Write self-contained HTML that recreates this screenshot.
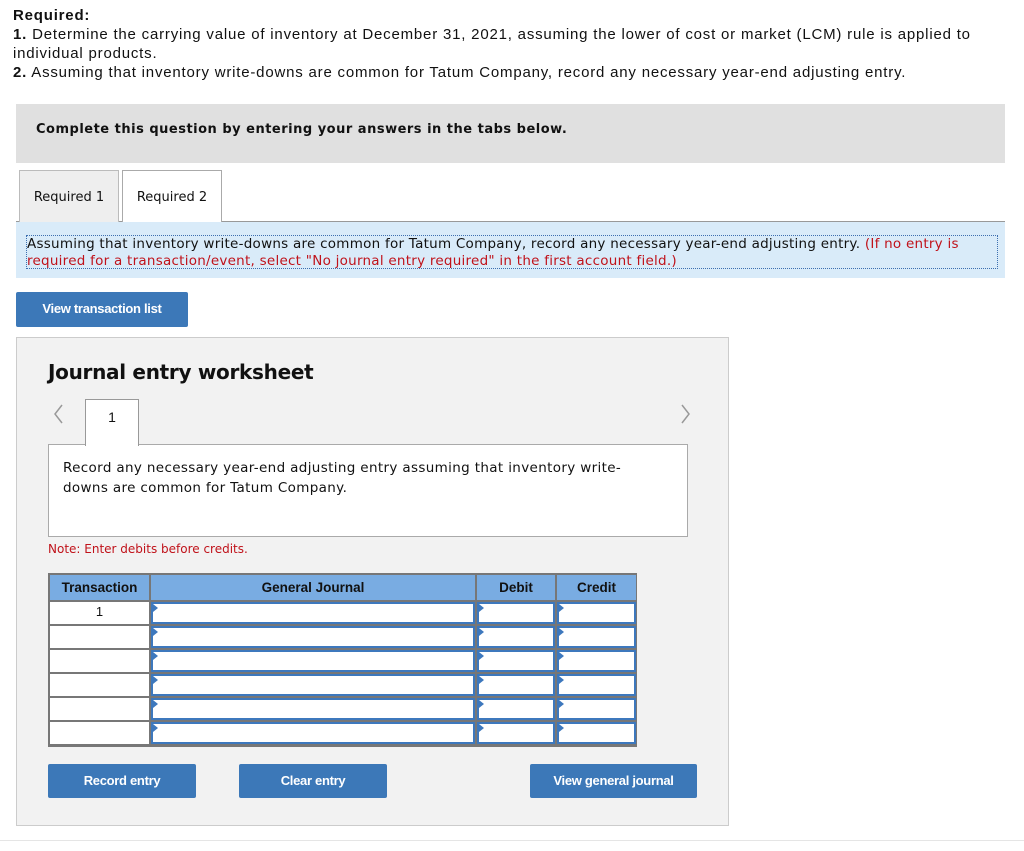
<!DOCTYPE html>
<html><head><style>
body{margin:0;width:1024px;height:851px;background:#fff;position:relative;font-family:"Liberation Sans",sans-serif;color:#111;overflow:hidden}
.a{position:absolute}
.v{font-family:"DejaVu Sans",sans-serif}
.btn{position:absolute;background:#3c78b8;color:#fff;font:bold 13px "Liberation Sans",sans-serif;text-align:center;border-radius:2px;letter-spacing:-0.3px}
.cell{position:absolute;box-sizing:border-box;background:#fff}
.in{position:absolute;box-sizing:border-box;background:#fff;border:2px solid #3d78bd}
.in:before{content:"";position:absolute;left:0;top:0;border-left:5px solid #3d78bd;border-top:4px solid transparent;border-bottom:4px solid transparent}
</style></head><body>
<div class="a" style="left:13px;top:6px;font-size:15px;line-height:19px;width:990px;letter-spacing:0.8px">
<b>Required:</b><br><b>1.</b> Determine the carrying value of inventory at December 31, 2021, assuming the lower of cost or market (LCM) rule is applied to individual products.<br><b>2.</b> Assuming that inventory write-downs are common for Tatum Company, record any necessary year-end adjusting entry.</div>
<div class="a" style="left:16px;top:104px;width:989px;height:59px;background:#e0e0e0"></div>
<div class="a v" style="left:36px;top:122px;font-size:13px;font-weight:bold;letter-spacing:0.5px">Complete this question by entering your answers in the tabs below.</div>
<div class="a" style="left:16px;top:221px;width:989px;height:1px;background:#999"></div>
<div class="a v" style="left:19px;top:170px;width:98px;height:51px;background:#eee;border:1px solid #bbb;border-bottom:none;font-size:13px;line-height:53px;text-align:center">Required 1</div>
<div class="a v" style="left:122px;top:170px;width:98px;height:53px;background:#fff;border:1px solid #aaa;border-bottom:none;font-size:13px;line-height:53px;text-align:center">Required 2</div>
<div class="a" style="left:16px;top:222px;width:989px;height:56px;background:#d9ebf9"></div>
<div class="a v" style="left:26px;top:235px;width:970px;height:32px;border:1px dotted #3d6fb0;font-size:13.5px;line-height:17px;letter-spacing:0.25px">Assuming that inventory write-downs are common for Tatum Company, record any necessary year-end adjusting entry. <span style="color:#c0121a">(If no entry is required for a transaction/event, select "No journal entry required" in the first account field.)</span></div>
<div class="btn" style="left:16px;top:292px;width:172px;height:35px;line-height:33px">View transaction list</div>
<div class="a" style="left:16px;top:337px;width:711px;height:487px;background:#f2f2f2;border:1px solid #ccc"></div>
<div class="a v" style="left:48px;top:360px;font-size:20px;font-weight:bold;letter-spacing:-0.3px">Journal entry worksheet</div>
<svg class="a" style="left:50px;top:402px" width="16" height="24"><path d="M12 3 L5 12 L12 21" stroke="#999" stroke-width="1.5" fill="none"/></svg>
<svg class="a" style="left:678px;top:402px" width="16" height="24"><path d="M4 3 L11 12 L4 21" stroke="#999" stroke-width="1.5" fill="none"/></svg>
<div class="a" style="left:85px;top:399px;width:52px;height:46px;background:#fff;border:1px solid #999;border-bottom:none;font-size:14px;text-align:center;line-height:34px;z-index:2">1</div>
<div class="a v" style="left:48px;top:444px;width:638px;height:91px;background:#fff;border:1px solid #aaa"></div>
<div class="a v" style="left:63px;top:458px;width:570px;font-size:13.5px;line-height:20px;letter-spacing:0.35px">Record any necessary year-end adjusting entry assuming that inventory write-downs are common for Tatum Company.</div>
<div class="a v" style="left:48px;top:542px;font-size:12px;color:#c0121a">Note: Enter debits before credits.</div>
<div class="a" style="left:48px;top:573px;width:589px;height:174px;background:#777"></div>
<div class="cell" style="left:50px;top:575px;width:99px;height:25px;background:#79ace2;font:bold 13.5px 'Liberation Sans';text-align:center;line-height:25px">Transaction</div>
<div class="cell" style="left:151px;top:575px;width:324px;height:25px;background:#79ace2;font:bold 13.5px 'Liberation Sans';text-align:center;line-height:25px">General Journal</div>
<div class="cell" style="left:477px;top:575px;width:78px;height:25px;background:#79ace2;font:bold 13.5px 'Liberation Sans';text-align:center;line-height:25px">Debit</div>
<div class="cell" style="left:557px;top:575px;width:79px;height:25px;background:#79ace2;font:bold 13.5px 'Liberation Sans';text-align:center;line-height:25px">Credit</div>
<div id="rows"></div>
<script>
var h='';for(var i=0;i<6;i++){var y=602+i*24;
h+='<div class="cell" style="left:50px;top:'+y+'px;width:99px;height:22px;font-size:13px;text-align:center;line-height:20px">'+(i==0?'1':'')+'</div>';
h+='<div class="in" style="left:151px;top:'+y+'px;width:324px;height:22px"></div>';
h+='<div class="in" style="left:477px;top:'+y+'px;width:78px;height:22px"></div>';
h+='<div class="in" style="left:557px;top:'+y+'px;width:79px;height:22px"></div>';}
document.getElementById('rows').innerHTML=h;
</script>
<div class="btn" style="left:48px;top:764px;width:148px;height:34px;line-height:33px">Record entry</div>
<div class="btn" style="left:239px;top:764px;width:148px;height:34px;line-height:33px">Clear entry</div>
<div class="btn" style="left:530px;top:764px;width:167px;height:34px;line-height:33px">View general journal</div>
<div class="a" style="left:0;top:840px;width:1024px;height:1px;background:#e5e5e5"></div>
</body></html>
